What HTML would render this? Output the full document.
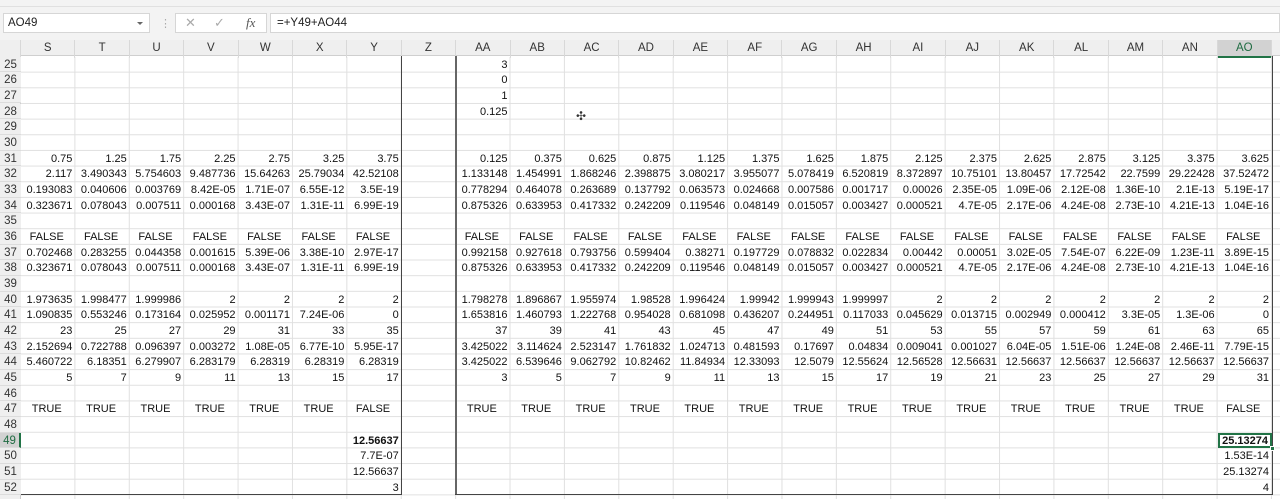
<!DOCTYPE html>
<html><head><meta charset="utf-8"><style>
*{margin:0;padding:0;box-sizing:border-box}
body{width:1280px;height:498px;overflow:hidden;background:#fff;font-family:"Liberation Sans",sans-serif;position:relative}
.rib{position:absolute;left:0;top:0;width:1280px;height:7px;background:#f3f3f3;border-bottom:1px solid #e0e0e0}
.fbar{position:absolute;left:0;top:7px;width:1280px;height:33px;background:#f3f3f3}
.nb{position:absolute;left:3px;top:6px;width:147px;height:20px;background:#fff;border:1px solid #d6d6d6;font-size:11.5px;padding:3px 4px;color:#222}
.nb:after{content:"";position:absolute;right:6px;top:8px;border:3px solid transparent;border-top:3px solid #666}
.ic{position:absolute;left:175px;top:6px;width:92px;height:20px;background:#fff;border:1px solid #d6d6d6;color:#aaa;font-size:13px}
.fx{position:absolute;left:270px;top:6px;width:1010px;height:20px;background:#fff;border:1px solid #d6d6d6;font-size:11.5px;padding:3px 6px;color:#222}
.hdr{position:absolute;left:0;top:40px;height:16px;width:1280px;background:#efefef;border-bottom:1px solid #cfcfcf;display:grid;grid-template-columns:21px repeat(23,54.4px);font-size:11.5px;color:#333}
.hdr span{text-align:center;border-right:1px solid #d8d8d8;line-height:16px}
.grid{position:absolute;left:0;top:56.5px;width:1280px;height:442px;
background-image:linear-gradient(to right,#e0e0e0 1px,transparent 1px),linear-gradient(to bottom,#e0e0e0 1px,transparent 1px);
background-size:54.4px 100%,100% 15.67px;background-position:20px 0,0 14.67px}
.rh{position:absolute;left:0;top:56.5px;width:21px;height:442px;background:#efefef;border-right:1px solid #cfcfcf}
.r{position:absolute;left:0;height:15.67px;display:grid;grid-template-columns:21px repeat(23,54.4px);font-size:11px;color:#111;line-height:16.5px}
.r>*{text-align:right;padding-right:3px;white-space:nowrap;overflow:hidden}
.r>b{font-weight:normal;text-align:center;color:#333;padding:0;font-size:11.5px;background:#efefef;border-bottom:1px solid #dcdcdc}
.r>i{font-style:normal;text-align:center}
.bd{font-weight:bold}
.ln{position:absolute;background:#444}
</style></head><body>
<div class="rib"></div>
<div class="fbar">
<div class="nb">AO49</div>
<div style="position:absolute;left:160px;top:10px;color:#aaa;font-size:11px">⋮</div>
<div class="ic"><span style="position:absolute;left:9px;top:1px">✕</span><span style="position:absolute;left:38px;top:1px">✓</span><span style="position:absolute;left:70px;top:1px;color:#555;font-style:italic;font-family:'Liberation Serif',serif">fx</span></div>
<div class="fx">=+Y49+AO44</div>
</div>
<div class="hdr"><span style="background:#efefef"></span><span>S</span><span>T</span><span>U</span><span>V</span><span>W</span><span>X</span><span>Y</span><span>Z</span><span>AA</span><span>AB</span><span>AC</span><span>AD</span><span>AE</span><span>AF</span><span>AG</span><span>AH</span><span>AI</span><span>AJ</span><span>AK</span><span>AL</span><span>AM</span><span>AN</span><span style="background:#d2d2d2;border-bottom:2px solid #217346;color:#1e6b41">AO</span></div>
<div class="grid"></div>
<div class="rh"></div>

<div class="r" style="top:56.5px"><b>25</b><s></s><s></s><s></s><s></s><s></s><s></s><s></s><s></s><span>3</span></div>
<div class="r" style="top:72.2px"><b>26</b><s></s><s></s><s></s><s></s><s></s><s></s><s></s><s></s><span>0</span></div>
<div class="r" style="top:87.8px"><b>27</b><s></s><s></s><s></s><s></s><s></s><s></s><s></s><s></s><span>1</span></div>
<div class="r" style="top:103.5px"><b>28</b><s></s><s></s><s></s><s></s><s></s><s></s><s></s><s></s><span>0.125</span></div>
<div class="r" style="top:119.2px"><b>29</b></div>
<div class="r" style="top:134.9px"><b>30</b></div>
<div class="r" style="top:150.5px"><b>31</b><span>0.75</span><span>1.25</span><span>1.75</span><span>2.25</span><span>2.75</span><span>3.25</span><span>3.75</span><span></span><span>0.125</span><span>0.375</span><span>0.625</span><span>0.875</span><span>1.125</span><span>1.375</span><span>1.625</span><span>1.875</span><span>2.125</span><span>2.375</span><span>2.625</span><span>2.875</span><span>3.125</span><span>3.375</span><span>3.625</span></div>
<div class="r" style="top:166.2px"><b>32</b><span>2.117</span><span>3.490343</span><span>5.754603</span><span>9.487736</span><span>15.64263</span><span>25.79034</span><span>42.52108</span><span></span><span>1.133148</span><span>1.454991</span><span>1.868246</span><span>2.398875</span><span>3.080217</span><span>3.955077</span><span>5.078419</span><span>6.520819</span><span>8.372897</span><span>10.75101</span><span>13.80457</span><span>17.72542</span><span>22.7599</span><span>29.22428</span><span>37.52472</span></div>
<div class="r" style="top:181.9px"><b>33</b><span>0.193083</span><span>0.040606</span><span>0.003769</span><span>8.42E-05</span><span>1.71E-07</span><span>6.55E-12</span><span>3.5E-19</span><span></span><span>0.778294</span><span>0.464078</span><span>0.263689</span><span>0.137792</span><span>0.063573</span><span>0.024668</span><span>0.007586</span><span>0.001717</span><span>0.00026</span><span>2.35E-05</span><span>1.09E-06</span><span>2.12E-08</span><span>1.36E-10</span><span>2.1E-13</span><span>5.19E-17</span></div>
<div class="r" style="top:197.5px"><b>34</b><span>0.323671</span><span>0.078043</span><span>0.007511</span><span>0.000168</span><span>3.43E-07</span><span>1.31E-11</span><span>6.99E-19</span><span></span><span>0.875326</span><span>0.633953</span><span>0.417332</span><span>0.242209</span><span>0.119546</span><span>0.048149</span><span>0.015057</span><span>0.003427</span><span>0.000521</span><span>4.7E-05</span><span>2.17E-06</span><span>4.24E-08</span><span>2.73E-10</span><span>4.21E-13</span><span>1.04E-16</span></div>
<div class="r" style="top:213.2px"><b>35</b></div>
<div class="r" style="top:228.9px"><b>36</b><i>FALSE</i><i>FALSE</i><i>FALSE</i><i>FALSE</i><i>FALSE</i><i>FALSE</i><i>FALSE</i><span></span><i>FALSE</i><i>FALSE</i><i>FALSE</i><i>FALSE</i><i>FALSE</i><i>FALSE</i><i>FALSE</i><i>FALSE</i><i>FALSE</i><i>FALSE</i><i>FALSE</i><i>FALSE</i><i>FALSE</i><i>FALSE</i><i>FALSE</i></div>
<div class="r" style="top:244.6px"><b>37</b><span>0.702468</span><span>0.283255</span><span>0.044358</span><span>0.001615</span><span>5.39E-06</span><span>3.38E-10</span><span>2.97E-17</span><span></span><span>0.992158</span><span>0.927618</span><span>0.793756</span><span>0.599404</span><span>0.38271</span><span>0.197729</span><span>0.078832</span><span>0.022834</span><span>0.00442</span><span>0.00051</span><span>3.02E-05</span><span>7.54E-07</span><span>6.22E-09</span><span>1.23E-11</span><span>3.89E-15</span></div>
<div class="r" style="top:260.2px"><b>38</b><span>0.323671</span><span>0.078043</span><span>0.007511</span><span>0.000168</span><span>3.43E-07</span><span>1.31E-11</span><span>6.99E-19</span><span></span><span>0.875326</span><span>0.633953</span><span>0.417332</span><span>0.242209</span><span>0.119546</span><span>0.048149</span><span>0.015057</span><span>0.003427</span><span>0.000521</span><span>4.7E-05</span><span>2.17E-06</span><span>4.24E-08</span><span>2.73E-10</span><span>4.21E-13</span><span>1.04E-16</span></div>
<div class="r" style="top:275.9px"><b>39</b></div>
<div class="r" style="top:291.6px"><b>40</b><span>1.973635</span><span>1.998477</span><span>1.999986</span><span>2</span><span>2</span><span>2</span><span>2</span><span></span><span>1.798278</span><span>1.896867</span><span>1.955974</span><span>1.98528</span><span>1.996424</span><span>1.99942</span><span>1.999943</span><span>1.999997</span><span>2</span><span>2</span><span>2</span><span>2</span><span>2</span><span>2</span><span>2</span></div>
<div class="r" style="top:307.2px"><b>41</b><span>1.090835</span><span>0.553246</span><span>0.173164</span><span>0.025952</span><span>0.001171</span><span>7.24E-06</span><span>0</span><span></span><span>1.653816</span><span>1.460793</span><span>1.222768</span><span>0.954028</span><span>0.681098</span><span>0.436207</span><span>0.244951</span><span>0.117033</span><span>0.045629</span><span>0.013715</span><span>0.002949</span><span>0.000412</span><span>3.3E-05</span><span>1.3E-06</span><span>0</span></div>
<div class="r" style="top:322.9px"><b>42</b><span>23</span><span>25</span><span>27</span><span>29</span><span>31</span><span>33</span><span>35</span><span></span><span>37</span><span>39</span><span>41</span><span>43</span><span>45</span><span>47</span><span>49</span><span>51</span><span>53</span><span>55</span><span>57</span><span>59</span><span>61</span><span>63</span><span>65</span></div>
<div class="r" style="top:338.6px"><b>43</b><span>2.152694</span><span>0.722788</span><span>0.096397</span><span>0.003272</span><span>1.08E-05</span><span>6.77E-10</span><span>5.95E-17</span><span></span><span>3.425022</span><span>3.114624</span><span>2.523147</span><span>1.761832</span><span>1.024713</span><span>0.481593</span><span>0.17697</span><span>0.04834</span><span>0.009041</span><span>0.001027</span><span>6.04E-05</span><span>1.51E-06</span><span>1.24E-08</span><span>2.46E-11</span><span>7.79E-15</span></div>
<div class="r" style="top:354.3px"><b>44</b><span>5.460722</span><span>6.18351</span><span>6.279907</span><span>6.283179</span><span>6.28319</span><span>6.28319</span><span>6.28319</span><span></span><span>3.425022</span><span>6.539646</span><span>9.062792</span><span>10.82462</span><span>11.84934</span><span>12.33093</span><span>12.5079</span><span>12.55624</span><span>12.56528</span><span>12.56631</span><span>12.56637</span><span>12.56637</span><span>12.56637</span><span>12.56637</span><span>12.56637</span></div>
<div class="r" style="top:369.9px"><b>45</b><span>5</span><span>7</span><span>9</span><span>11</span><span>13</span><span>15</span><span>17</span><span></span><span>3</span><span>5</span><span>7</span><span>9</span><span>11</span><span>13</span><span>15</span><span>17</span><span>19</span><span>21</span><span>23</span><span>25</span><span>27</span><span>29</span><span>31</span></div>
<div class="r" style="top:385.6px"><b>46</b></div>
<div class="r" style="top:401.3px"><b>47</b><i>TRUE</i><i>TRUE</i><i>TRUE</i><i>TRUE</i><i>TRUE</i><i>TRUE</i><i>FALSE</i><span></span><i>TRUE</i><i>TRUE</i><i>TRUE</i><i>TRUE</i><i>TRUE</i><i>TRUE</i><i>TRUE</i><i>TRUE</i><i>TRUE</i><i>TRUE</i><i>TRUE</i><i>TRUE</i><i>TRUE</i><i>TRUE</i><i>FALSE</i></div>
<div class="r" style="top:416.9px"><b>48</b></div>
<div class="r" style="top:432.6px"><b style="background:#d2d2d2;color:#1e6b41;border-right:2px solid #217346">49</b><s></s><s></s><s></s><s></s><s></s><s></s><span class="bd">12.56637</span><s></s><s></s><s></s><s></s><s></s><s></s><s></s><s></s><s></s><s></s><s></s><s></s><s></s><s></s><s></s><span class="bd" style="border:2px solid #217346;line-height:12px;padding-right:2px">25.13274</span></div>
<div class="r" style="top:448.3px"><b>50</b><s></s><s></s><s></s><s></s><s></s><s></s><span>7.7E-07</span><s></s><s></s><s></s><s></s><s></s><s></s><s></s><s></s><s></s><s></s><s></s><s></s><s></s><s></s><s></s><span>1.53E-14</span></div>
<div class="r" style="top:464px"><b>51</b><s></s><s></s><s></s><s></s><s></s><s></s><span>12.56637</span><s></s><s></s><s></s><s></s><s></s><s></s><s></s><s></s><s></s><s></s><s></s><s></s><s></s><s></s><s></s><span>25.13274</span></div>
<div class="r" style="top:479.6px"><b>52</b><s></s><s></s><s></s><s></s><s></s><s></s><span>3</span><s></s><s></s><s></s><s></s><s></s><s></s><s></s><s></s><s></s><s></s><s></s><s></s><s></s><s></s><s></s><span>4</span></div>

<div class="ln" style="left:401px;top:56px;width:1px;height:439px"></div>
<div class="ln" style="left:21px;top:494px;width:381px;height:1px"></div>
<div class="ln" style="left:455px;top:56px;width:2px;height:439px;background:#666"></div>
<div class="ln" style="left:455px;top:494px;width:818px;height:1px"></div>
<div class="ln" style="left:1272px;top:56px;width:1px;height:439px"></div>
<div style="position:absolute;left:1270px;top:446px;width:5px;height:5px;background:#217346;border:1px solid #fff"></div>
<div style="position:absolute;left:576px;top:109px;font-size:12px;color:#333">✣</div>
</body></html>
